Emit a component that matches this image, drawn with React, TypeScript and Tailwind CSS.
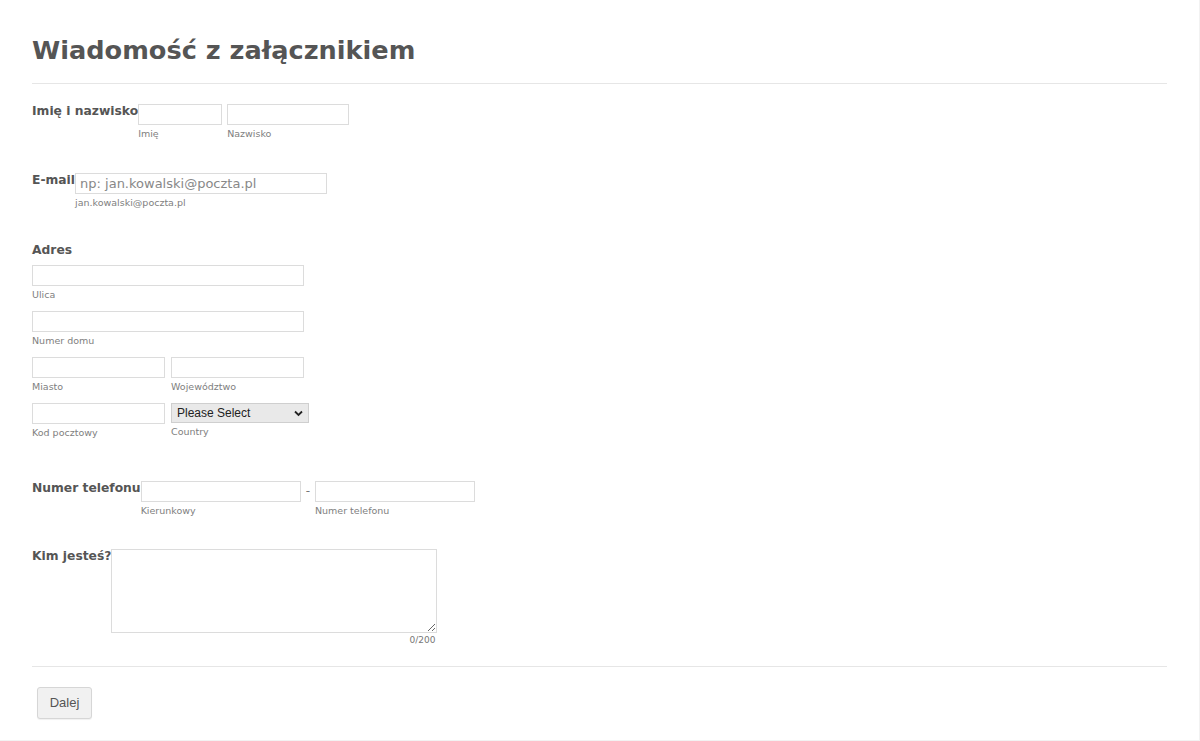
import React from "react";

const inputCls =
  "block h-[21px] border border-[#dcdcdc] bg-white px-1 text-[13px] outline-none";
const subCls = "mt-[3px] text-[9.5px] leading-[12px] text-[#808080]";
const labelCls = "text-[12.3px] font-bold leading-[15px] text-[#555]";

export default function App() {
  return (
    <div className="h-[741px] w-[1200px] overflow-hidden border-r border-b border-[#f2f2f2] bg-white font-['DejaVu_Sans',sans-serif] text-[#555]">
      <div className="px-8">
        <h1 className="pt-[33px] text-[25.6px] font-bold leading-[34px] text-[#555]">
          Wiadomość z załącznikiem
        </h1>
        <div className="mt-[16px] h-px bg-[#e6e6e6]" />

        {/* Imię i nazwisko */}
        <div className="mt-[20px] flex">
          <span className={labelCls}>Imię i nazwisko</span>
          <div className="flex gap-[5px]">
            <div className="flex flex-col">
              <input className={inputCls + " w-[84px]"} />
              <span className={subCls}>Imię</span>
            </div>
            <div className="flex flex-col">
              <input className={inputCls + " w-[122px]"} />
              <span className={subCls}>Nazwisko</span>
            </div>
          </div>
        </div>

        {/* E-mail */}
        <div className="mt-[33px] flex">
          <span className={labelCls}>E-mail</span>
          <div className="flex flex-col">
            <input
              className={inputCls + " w-[252px] placeholder:text-[#888]"}
              placeholder="np: jan.kowalski@poczta.pl"
            />
            <span className={subCls + " text-[#555]"}>jan.kowalski@poczta.pl</span>
          </div>
        </div>

        {/* Adres */}
        <div className="mt-[34px] flex flex-col">
          <span className={labelCls}>Adres</span>
          <div className="mt-[7px] flex flex-col">
            <input className={inputCls + " w-[272px]"} />
            <span className={subCls}>Ulica</span>
          </div>
          <div className="mt-[10px] flex flex-col">
            <input className={inputCls + " w-[272px]"} />
            <span className={subCls}>Numer domu</span>
          </div>
          <div className="mt-[10px] flex gap-[6px]">
            <div className="flex flex-col">
              <input className={inputCls + " w-[133px]"} />
              <span className={subCls}>Miasto</span>
            </div>
            <div className="flex flex-col">
              <input className={inputCls + " w-[133px]"} />
              <span className={subCls}>Województwo</span>
            </div>
          </div>
          <div className="mt-[10px] flex gap-[6px]">
            <div className="flex flex-col">
              <input className={inputCls + " w-[133px]"} />
              <span className={subCls}>Kod pocztowy</span>
            </div>
            <div className="flex flex-col">
              <div className="relative h-[20px] w-[138px] border border-[#cfcfcf] bg-[#e9e9e9]">
                <span className="absolute left-[5px] top-[2px] font-['Liberation_Sans',Arial,sans-serif] text-[12px] leading-[14px] text-[#222]">
                  Please Select
                </span>
                <svg
                  className="absolute right-[5px] top-[6px]"
                  width="9"
                  height="7"
                  viewBox="0 0 9 7"
                >
                  <path d="M1 1.5 L4.5 5 L8 1.5" stroke="#222" strokeWidth="1.8" fill="none" />
                </svg>
              </div>
              <span className={subCls}>Country</span>
            </div>
          </div>
        </div>

        {/* Numer telefonu */}
        <div className="mt-[42px] flex">
          <span className={labelCls}>Numer telefonu</span>
          <div className="flex flex-col">
            <input className={inputCls + " w-[160px]"} />
            <span className={subCls}>Kierunkowy</span>
          </div>
          <span className="mx-[5px] mt-[3px] text-[12px] leading-[15px] text-[#777]">-</span>
          <div className="flex flex-col">
            <input className={inputCls + " w-[160px]"} />
            <span className={subCls}>Numer telefonu</span>
          </div>
        </div>

        {/* Kim jesteś */}
        <div className="mt-[32px] flex">
          <span className={labelCls}>Kim jesteś?</span>
          <div className="flex flex-col">
            <textarea className="block h-[84px] w-[326px] border border-[#dcdcdc] bg-white outline-none" />
            <span className="mt-[2px] self-end pr-[2px] text-[9px] leading-[11px] text-[#777]">
              0/200
            </span>
          </div>
        </div>

        <div className="mt-[20px] h-px bg-[#e6e6e6]" />

        <div className="mt-[20px] pl-[5px]">
          <button className="h-[32px] w-[55px] rounded-[3px] border border-[#d6d6d6] bg-[#f1f1f1] font-['Liberation_Sans',Arial,sans-serif] text-[13px] text-[#555] shadow-[0_1px_1px_rgba(0,0,0,0.06)]">
            Dalej
          </button>
        </div>
      </div>
    </div>
  );
}
